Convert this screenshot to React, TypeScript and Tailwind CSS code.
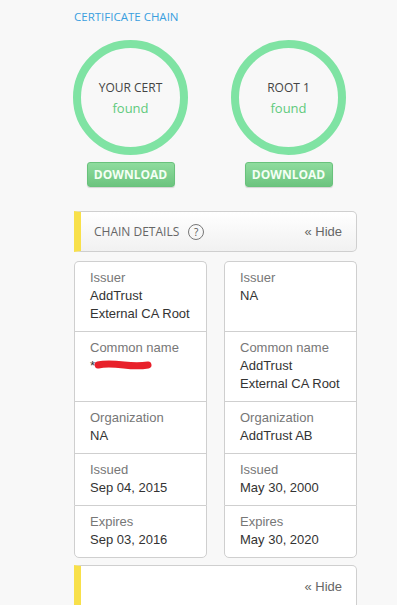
const certs = [
  { title: 'YOUR CERT', status: 'found' },
  { title: 'ROOT 1', status: 'found' },
];

type Row = { label: string; left: React.ReactNode; right: React.ReactNode };

const Redacted = () => (
  <span className="inline-flex items-center">
    *
    <svg width="58" height="12" viewBox="0 0 58 12" className="-ml-[1px] -mt-[2px]">
      <path
        d="M4 6 C 12 4, 22 5, 30 6 S 48 7, 54 6"
        stroke="#e8202a"
        strokeWidth="7"
        strokeLinecap="round"
        fill="none"
      />
    </svg>
  </span>
);

const rows: Row[] = [
  { label: 'Issuer', left: <>AddTrust<br />External CA Root</>, right: 'NA' },
  { label: 'Common name', left: <Redacted />, right: <>AddTrust<br />External CA Root</> },
  { label: 'Organization', left: 'NA', right: 'AddTrust AB' },
  { label: 'Issued', left: 'Sep 04, 2015', right: 'May 30, 2000' },
  { label: 'Expires', left: 'Sep 03, 2016', right: 'May 30, 2020' },
];

const Cell = ({ label, value, first, last }: { label: string; value: React.ReactNode; first: boolean; last: boolean }) => (
  <div
    className={
      'bg-white border-x border-[#cfcfcf] px-[15px] pt-[7px] pb-[8px] ' +
      (first ? 'border-t rounded-t-[5px] ' : 'border-t ') +
      (last ? 'border-b rounded-b-[5px]' : '')
    }
  >
    <div className="text-[#777]">{label}</div>
    <div className="text-[#333]">{value}</div>
  </div>
);

export default function App() {
  return (
    <div className="min-h-screen bg-[#f8f8f8] overflow-hidden">
      <div className="w-[283px] ml-[74px] pt-[9px]">
        <div className="text-[11.5px] text-[#3a9fdf] font-['Open_Sans',sans-serif] leading-[16px]">
          CERTIFICATE CHAIN
        </div>

        <div className="flex gap-[43px] -ml-[1px] mt-[15px]">
          {certs.map((c) => (
            <div key={c.title} className="flex flex-col items-center w-[115px]">
              <div className="w-[115px] h-[115px] rounded-full border-[8px] border-[#7fe3a3] flex flex-col items-center justify-center font-['Open_Sans',sans-serif]">
                <div className="text-[12px] text-[#444] leading-[18px]">{c.title}</div>
                <div className="text-[13px] text-[#5fca7c] leading-[18px] mt-[2px]">{c.status}</div>
              </div>
              <button className="mt-[7px] w-[88px] h-[25px] rounded-[3px] border border-[#69c27c] bg-gradient-to-b from-[#8fdc9e] to-[#6cc47f] text-[#f4fff5] font-bold text-[12px] font-['Open_Sans',sans-serif] shadow-[0_1px_1px_rgba(0,0,0,0.15)]">
                DOWNLOAD
              </button>
            </div>
          ))}
        </div>

        <div className="mt-[24px] h-[41px] flex items-center justify-between border border-[#cfcfcf] border-l-[7px] border-l-[#f8e04a] rounded-r-[5px] bg-gradient-to-b from-white to-[#f1f1f1] pl-[13px] pr-[14px]">
          <div className="flex items-center gap-[9px]">
            <span className="text-[12px] text-[#666] font-['Open_Sans',sans-serif]">CHAIN DETAILS</span>
            <span className="w-[16px] h-[16px] rounded-full border border-[#777] flex items-center justify-center text-[10px] text-[#555] font-['Open_Sans',sans-serif] leading-none">
              ?
            </span>
          </div>
          <span className="text-[13px] text-[#666] font-['Liberation_Sans',Arial,sans-serif]">« Hide</span>
        </div>

        <div className="mt-[9px] grid grid-cols-2 gap-x-[17px] text-[13px] leading-[18px] font-['Liberation_Sans',Arial,sans-serif]">
          {rows.map((r, i) => (
            <>
              <Cell key={r.label + 'l'} label={r.label} value={r.left} first={i === 0} last={i === rows.length - 1} />
              <Cell key={r.label + 'r'} label={r.label} value={r.right} first={i === 0} last={i === rows.length - 1} />
            </>
          ))}
        </div>

        <div className="mt-[7px] h-[60px] flex items-start justify-end border border-[#cfcfcf] border-l-[7px] border-l-[#f8e04a] rounded-tr-[5px] bg-white pr-[14px] pt-[11px]">
          <span className="text-[13px] text-[#666] font-['Liberation_Sans',Arial,sans-serif]">« Hide</span>
        </div>
      </div>
    </div>
  );
}
